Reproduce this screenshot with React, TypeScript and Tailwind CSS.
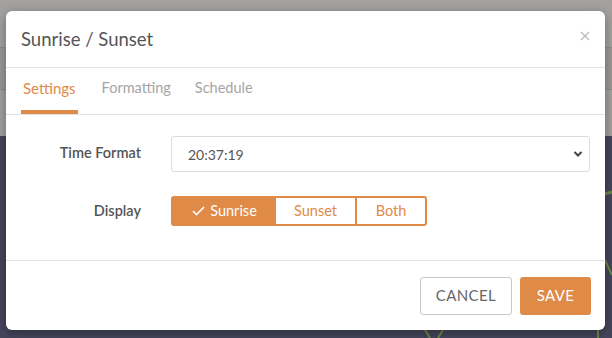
import React from 'react';

const font = { fontFamily: 'Lato, "Open Sans", sans-serif' };

export default function App() {
  return (
    <div className="relative w-[612px] h-[338px] overflow-hidden bg-[#45455c]" style={font}>
      {/* page behind the overlay */}
      <div className="flex flex-col">
        <div className="h-[48px] bg-[#a3a2a0] border-b border-[#8e8e8c]" />
        <div className="h-[42px] bg-[#9a9998] border-b border-[#8e8e8c]" />
        <div className="h-[46px] bg-[#a2a1a0]" />
      </div>
      <svg className="absolute left-0 top-0" width="612" height="338">
        <path d="M600 195 L612 192" stroke="#6a8a4a" strokeWidth="3" fill="none" />
        <path d="M605 260 L612 275" stroke="#6a8a4a" strokeWidth="2" fill="none" />
        <path d="M425 330 L430 338 M443 330 L438 338 M598 325 L598 338" stroke="#6a8a4a" strokeWidth="2" fill="none" />
      </svg>

      <div className="absolute left-[6px] top-[11px] w-[599px] h-[319px] bg-white rounded-[6px] shadow-[0_3px_12px_rgba(0,0,0,0.35)] flex flex-col">
        <div className="h-[57px] flex items-center justify-between pl-[15px] pr-[15px] border-b border-[#e2e2e2]">
          <h1 className="text-[18.5px] text-[#555] leading-none">Sunrise / Sunset</h1>
          <svg width="10" height="10" viewBox="0 0 10 10" className="mb-[6px]">
            <path d="M1 1 L9 9 M9 1 L1 9" stroke="#bbb" strokeWidth="1.4" fill="none" />
          </svg>
        </div>

        <div className="h-[47px] flex items-end gap-[24px] px-[15px] border-b border-[#e2e2e2]">
          <div className="flex flex-col items-center">
            <span className="text-[15px] text-[#e08a47] px-[2px] pb-[11px]">Settings</span>
            <div className="h-[4px] w-full bg-[#e08a47]" />
          </div>
          <span className="text-[14.5px] text-[#a5a5a5] pb-[15px]">Formatting</span>
          <span className="text-[14.5px] text-[#a5a5a5] pb-[15px]">Schedule</span>
        </div>

        <div className="flex-1 flex flex-col pt-[21px] gap-[24px] border-b border-[#e2e2e2]">
          <div className="flex items-center">
            <label className="w-[135px] text-right text-[14.5px] font-semibold text-[#555] mb-[3px]">Time Format</label>
            <div className="ml-[30px] w-[419px] h-[36px] border border-[#dcdcdc] rounded-[3px] flex items-center justify-between pl-[16px] pr-[6px]">
              <span className="text-[14px] text-[#555]">20:37:19</span>
              <svg width="10" height="8" viewBox="0 0 10 8">
                <path d="M1.5 2 L5 5.5 L8.5 2" stroke="#444" strokeWidth="2" fill="none" />
              </svg>
            </div>
          </div>
          <div className="flex items-center">
            <label className="w-[135px] text-right text-[14.5px] font-semibold text-[#555]">Display</label>
            <div className="ml-[30px] flex h-[30px] border-2 border-[#e08a47] rounded-[3px] text-[14.5px]">
              <div className="w-[103px] bg-[#e08a47] text-white flex items-center justify-center gap-[5px]">
                <svg width="13" height="10" viewBox="0 0 13 10">
                  <path d="M1 5 L4.5 8.5 L12 1" stroke="#fff" strokeWidth="1.6" fill="none" />
                </svg>
                Sunrise
              </div>
              <div className="w-[81px] text-[#e08a47] flex items-center justify-center border-r-2 border-[#e08a47]">Sunset</div>
              <div className="w-[68px] text-[#e08a47] flex items-center justify-center">Both</div>
            </div>
          </div>
        </div>

        <div className="h-[69px] flex items-center justify-end gap-[8px] pr-[14px]">
          <button className="w-[92px] h-[38px] border border-[#c8c8c8] rounded-[3px] text-[15px] text-[#666] tracking-wide">CANCEL</button>
          <button className="w-[71px] h-[38px] bg-[#e08a47] rounded-[3px] text-[15px] text-white tracking-wide">SAVE</button>
        </div>
      </div>
    </div>
  );
}
